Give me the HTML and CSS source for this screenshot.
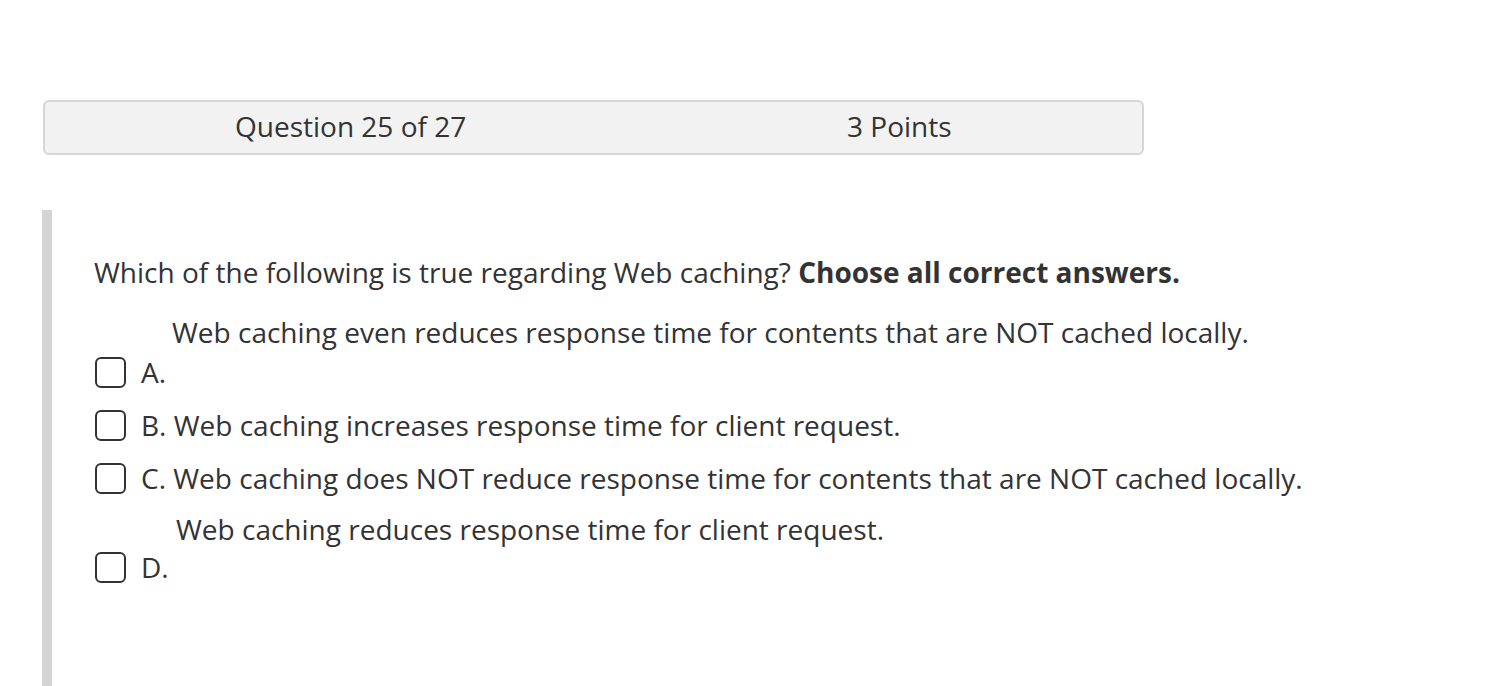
FILE: index.html
```html
<!DOCTYPE html>
<html>
<head>
<meta charset="utf-8">
<link rel="stylesheet" href="styles.css">
</head>
<body>
<div class="page">
  <div class="header">
    <div class="hdr-q">Question 25 of 27</div>
    <div class="hdr-p">3 Points</div>
  </div>
  <div class="question">
    <p class="prompt">Which of the following is true regarding Web caching? <b>Choose all correct answers.</b></p>
    <div class="options">
      <div class="option">
        <div class="above">Web caching even reduces response time for contents that are NOT cached locally.</div>
        <div class="row"><span class="box"></span><span class="lbl">A.</span></div>
      </div>
      <div class="option">
        <div class="row"><span class="box"></span><span class="lbl">B. Web caching increases response time for client request.</span></div>
      </div>
      <div class="option">
        <div class="row"><span class="box"></span><span class="lbl">C. Web caching does NOT reduce response time for contents that are NOT cached locally.</span></div>
      </div>
      <div class="option">
        <div class="above d">Web caching reduces response time for client request.</div>
        <div class="row"><span class="box"></span><span class="lbl">D.</span></div>
      </div>
    </div>
  </div>
</div>
</body>
</html>
```
FILE: styles.css
```css
html, body {
  margin: 0;
  padding: 0;
  background: #ffffff;
}
body {
  font-family: "Open Sans", "Liberation Sans", sans-serif;
  color: #333333;
  font-size: 28px;
}
.page {
  padding: 100px 0 0 42px;
}
.header {
  width: 1101px;
  height: 55px;
  margin-left: 1px;
  box-sizing: border-box;
  border: 2px solid #d6d6d6;
  border-radius: 6px;
  background: #f2f2f2;
  display: flex;
  align-items: center;
  padding-bottom: 3px;
}
.hdr-q {
  margin-left: 190px;
  width: 612px;
}
.question {
  margin-top: 55px;
  border-left: 10px solid #d4d4d4;
  height: 476px;
  padding: 42px 0 0 42px;
  box-sizing: border-box;
}
.prompt {
  margin: 0;
  line-height: 40px;
}
.prompt b {
  font-weight: 700;
}
.options {
  margin-top: 20px;
  display: flex;
  flex-direction: column;
  gap: 13px;
}
.above {
  padding-left: 78px;
  line-height: 40px;
}
.above.d {
  padding-left: 82px;
  line-height: 36px;
}
.row {
  display: flex;
  align-items: center;
  height: 40px;
  padding-left: 1px;
}
.box {
  width: 31px;
  height: 31px;
  box-sizing: border-box;
  border: 2.5px solid #333333;
  border-radius: 6px;
  margin-right: 15px;
  flex: none;
}
.lbl {
  line-height: 40px;
}
```
